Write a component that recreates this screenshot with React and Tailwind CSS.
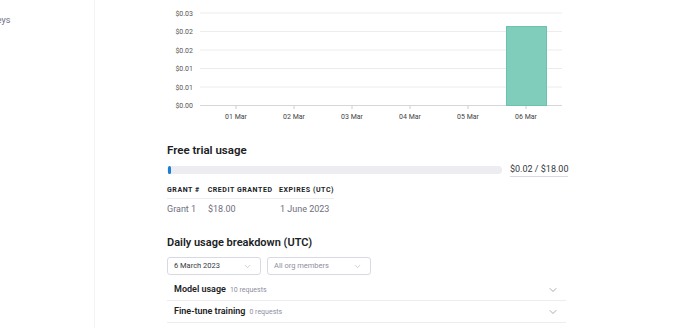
import { ChevronDown } from 'lucide-react';

const yTicks = [
  { label: '$0.03', y: 13 },
  { label: '$0.02', y: 31.5 },
  { label: '$0.02', y: 50 },
  { label: '$0.01', y: 68.5 },
  { label: '$0.01', y: 87 },
  { label: '$0.00', y: 105.5 },
];

const days = ['01 Mar', '02 Mar', '03 Mar', '04 Mar', '05 Mar', '06 Mar'];

const UsageChart = () => {
  // chart coords are relative to the content column (x=167)
  return (
    <svg width="400" height="124" className="block" style={{ fontFamily: 'Roboto, sans-serif' }}>
      {yTicks.map((t, i) => (
        <g key={i}>
          <text x="26" y={t.y + 2.5} textAnchor="end" fontSize="7" fill="#555">{t.label}</text>
          <line x1="33" x2="395" y1={t.y} y2={t.y} stroke={i === yTicks.length - 1 ? '#d6d6d6' : '#ececec'} strokeWidth="1" />
        </g>
      ))}
      {days.map((d, i) => {
        const x = 69 + i * 58;
        return (
          <g key={d}>
            <line x1={x} x2={x} y1="106" y2="109" stroke="#ccc" />
            <text x={x} y="118.5" textAnchor="middle" fontSize="7" fill="#444">{d}</text>
          </g>
        );
      })}
      <rect x="339.5" y="26.5" width="40" height="79" fill="#7fcdba" stroke="#6cc3ad" strokeWidth="1" />
    </svg>
  );
};

const Select = ({ label, muted, width }) => (
  <div className={`flex items-center justify-between h-[18px] border border-[#d9d9e3] rounded-[3px] pl-[6px] pr-[8px] ${width}`}>
    <span className={`text-[7.5px] whitespace-nowrap ${muted ? 'text-[#8e8ea0]' : 'text-[#353740]'}`}>{label}</span>
    <ChevronDown size={9} strokeWidth={1.5} className="text-[#acacbe]" />
  </div>
);

const AccordionRow = ({ title, count }) => (
  <div className="flex items-center justify-between h-[22px] border-b border-[#ececf1] pl-[7px] pr-[7px]">
    <div className="flex items-baseline gap-[4px] whitespace-nowrap">
      <span className="text-[9px] font-semibold text-[#202123]">{title}</span>
      <span className="text-[7px] text-[#8e8ea0]">{count}</span>
    </div>
    <ChevronDown size={12} strokeWidth={1.5} className="text-[#8e8ea0]" />
  </div>
);

export default function App() {
  return (
    <div className="flex w-[690px] h-[328px] overflow-hidden bg-white" style={{ fontFamily: 'Roboto, "Noto Sans", sans-serif' }}>
      {/* sidebar, scrolled horizontally so only the tail of a label shows */}
      <div className="w-[95px] shrink-0 border-r border-[#f3f3f3] overflow-hidden">
        <div className="mt-[14px] ml-[-24px] text-[9px] text-[#6e6e80] whitespace-nowrap">API keys</div>
      </div>

      <div className="pl-[72px] flex-1 min-w-0">
        <UsageChart />

        <h2 className="mt-[18px] text-[11.5px] font-semibold text-[#202123] leading-[16px]">Free trial usage</h2>

        <div className="mt-[4px] flex items-center whitespace-nowrap">
          <div className="w-[335px] h-[8px] rounded-full bg-[#ececf1] relative shrink-0">
            <div className="absolute left-[1px] top-0 h-[8px] w-[3px] rounded-full bg-[#1a7fd4]" />
          </div>
          <span className="ml-[8px] text-[9px] text-[#353740] border-b border-[#d9d9e3] leading-[14px]">$0.02 / $18.00</span>
        </div>

        <div className="mt-[5px] w-[167px] whitespace-nowrap">
          <div className="flex h-[17px] items-center border-b border-[#ececf1] text-[7px] font-bold tracking-[0.08em] text-[#202123]">
            <span className="w-[41px]">GRANT #</span>
            <span className="w-[72px]">CREDIT GRANTED</span>
            <span>EXPIRES (UTC)</span>
          </div>
          <div className="flex h-[22px] items-center text-[9px] text-[#6e6e80]">
            <span className="w-[41px]">Grant 1</span>
            <span className="w-[72px]">$18.00</span>
            <span>1 June 2023</span>
          </div>
        </div>

        <h2 className="mt-[14px] text-[11px] font-semibold text-[#202123] leading-[16px]">Daily usage breakdown (UTC)</h2>

        <div className="mt-[6px] flex gap-[6px]">
          <Select label="6 March 2023" width="w-[94px]" />
          <Select label="All org members" muted width="w-[104px]" />
        </div>

        <div className="mt-[4px] w-[399px]">
          <AccordionRow title="Model usage" count="10 requests" />
          <AccordionRow title="Fine-tune training" count="0 requests" />
        </div>
      </div>
    </div>
  );
}
